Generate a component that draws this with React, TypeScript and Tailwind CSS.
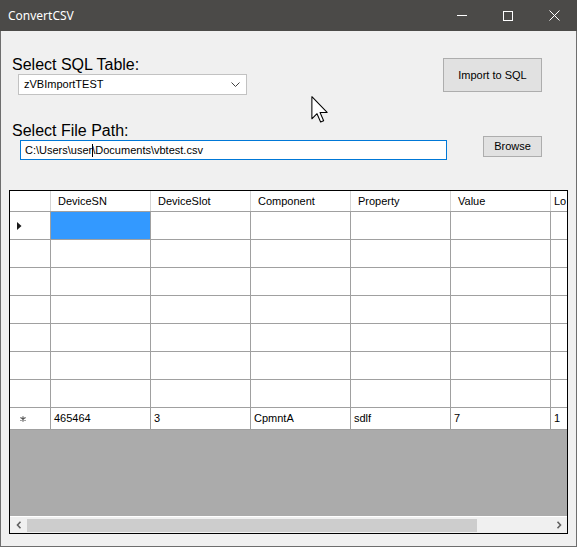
import React from "react";

const columns = ["DeviceSN", "DeviceSlot", "Component", "Property", "Value"];
const lastRow = ["465464", "3", "CpmntA", "sdlf", "7"];

function TitleBar() {
  return (
    <div className="flex h-[31px] items-center bg-[#4b4a48] text-white">
      <span className="ml-[8px] text-[12px] font-['Noto_Sans',sans-serif]">ConvertCSV</span>
      <div className="ml-auto flex h-full">
        <div className="flex w-[46px] items-center justify-center">
          <div className="h-px w-[10px] bg-white" />
        </div>
        <div className="flex w-[46px] items-center justify-center">
          <div className="h-[10px] w-[10px] border border-white" />
        </div>
        <div className="flex w-[46px] items-center justify-center">
          <svg width="11" height="11" viewBox="0 0 11 11">
            <path d="M0.5 0.5L10.5 10.5M10.5 0.5L0.5 10.5" stroke="white" strokeWidth="1" />
          </svg>
        </div>
      </div>
    </div>
  );
}

function Cursor() {
  return (
    <svg
      className="absolute left-[310px] top-[65px]"
      width="17"
      height="27"
      viewBox="0 0 12 19.5"
    >
      <path
        d="M0.5 0.5V16.5L4.2 12.8L6.8 18.8L9 17.9L6.4 11.9H11.5Z"
        fill="white"
        stroke="black"
        strokeWidth="0.75"
        strokeLinejoin="round"
      />
    </svg>
  );
}

function GridView() {
  const emptyRows = [0, 1, 2, 3, 4, 5, 6];
  return (
    <div className="ml-[8px] mt-[30px] flex h-[344px] w-[559px] flex-col border border-black bg-[#ababab] text-[11px] text-black">
      {/* header */}
      <div className="flex h-[21px] shrink-0 border-b border-[#a0a0a0] bg-white">
        <div className="w-[41px] border-r border-[#d4d4d4]" />
        {columns.map((c) => (
          <div
            key={c}
            className="flex w-[100px] items-center border-r border-[#d4d4d4] pl-[7px]"
          >
            {c}
          </div>
        ))}
        <div className="flex flex-1 items-center overflow-hidden whitespace-nowrap pl-[3px]">
          Lo
        </div>
      </div>

      {emptyRows.map((r) => (
        <div key={r} className="flex h-[28px] shrink-0 border-b border-[#a0a0a0] bg-white">
          <div className="flex w-[41px] items-center border-r border-[#a0a0a0] pl-[7px]">
            {r === 0 && (
              <svg width="5" height="8" viewBox="0 0 5 8">
                <path d="M0 0L4.5 4L0 8Z" fill="#1a1a1a" />
              </svg>
            )}
          </div>
          {columns.map((c, i) => (
            <div
              key={c}
              className={`w-[100px] border-r border-[#a0a0a0] ${
                r === 0 && i === 0 ? "bg-[#3399ff]" : ""
              }`}
            />
          ))}
          <div className="flex-1" />
        </div>
      ))}

      <div className="flex h-[22px] shrink-0 border-b border-[#a0a0a0] bg-white">
        <div className="flex w-[41px] items-center border-r border-[#a0a0a0] pl-[10px]">
          <svg width="6" height="6" viewBox="0 0 6 6">
            <path
              d="M3 0.3V5.7M0.4 1.6L5.6 4.4M0.4 4.4L5.6 1.6"
              stroke="#555"
              strokeWidth="1.1"
            />
          </svg>
        </div>
        {lastRow.map((v, i) => (
          <div key={i} className="flex w-[100px] items-center border-r border-[#a0a0a0] pl-[3px]">
            {v}
          </div>
        ))}
        <div className="flex flex-1 items-center pl-[3px]">1</div>
      </div>

      <div className="flex-1" />

      {/* horizontal scrollbar */}
      <div className="flex h-[17px] shrink-0 items-center border-t border-white bg-[#f0f0f0]">
        <div className="flex h-full w-[17px] items-center justify-center">
          <svg width="6" height="8" viewBox="0 0 6 8">
            <path d="M4.5 0.8L1.5 4L4.5 7.2" fill="none" stroke="#606060" strokeWidth="1.6" />
          </svg>
        </div>
        <div className="h-[13px] w-[450px] bg-[#cdcdcd]" />
        <div className="ml-auto flex h-full w-[17px] items-center justify-center">
          <svg width="6" height="8" viewBox="0 0 6 8">
            <path d="M1.5 0.8L4.5 4L1.5 7.2" fill="none" stroke="#606060" strokeWidth="1.6" />
          </svg>
        </div>
      </div>
    </div>
  );
}

export default function App() {
  return (
    <div className="flex h-[547px] w-[577px] flex-col bg-[#4b4a48] font-['Liberation_Sans',Arial,sans-serif]">
      <TitleBar />
      <div className="relative flex flex-1 flex-col border-x border-b border-[#6e6e6e] bg-[#f0f0f0]">
        {/* SQL table row */}
        <div className="mt-[25px] flex items-start">
          <div className="ml-[11px] flex flex-col">
            <span className="h-[18px] text-[16px] leading-[18px] text-black">Select SQL Table:</span>
            <div className="ml-[6px] flex h-[21px] w-[229px] items-center border border-[#c2c2c2] bg-white pl-[5px] text-[11px] text-black">
              zVBImportTEST
              <svg className="ml-auto mr-[6px]" width="9" height="5" viewBox="0 0 9 5">
                <path d="M0.5 0.5L4.5 4.5L8.5 0.5" fill="none" stroke="#404040" strokeWidth="1" />
              </svg>
            </div>
          </div>
          <button className="ml-auto mr-[34px] mt-[2px] h-[34px] w-[99px] border border-[#adadad] bg-[#e1e1e1] text-[11px] text-black">
            Import to SQL
          </button>
        </div>

        {/* file path row */}
        <div className="mt-[27px] flex items-start">
          <div className="ml-[11px] flex flex-col">
            <span className="h-[18px] text-[16px] leading-[18px] text-black">Select File Path:</span>
            <div className="ml-[8px] flex h-[20px] w-[427px] items-center border border-[#0078d7] bg-white pl-[4px] text-[11px] text-black">
              C:\Users\user
              <span className="mx-[-0.5px] inline-block h-[13px] w-px bg-black" />
              \Documents\vbtest.csv
            </div>
          </div>
          <button className="ml-auto mr-[34px] mt-[14px] h-[21px] w-[59px] border border-[#adadad] bg-[#e1e1e1] text-[11px] text-black">
            Browse
          </button>
        </div>

        <GridView />
        <Cursor />
      </div>
    </div>
  );
}
